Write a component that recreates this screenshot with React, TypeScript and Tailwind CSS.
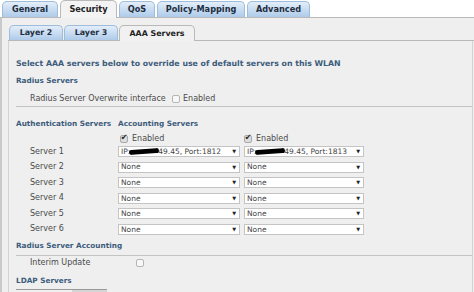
const outerTabs = [
  { label: "General", w: "w-[56px]" },
  { label: "Security", w: "w-[57px]", active: true },
  { label: "QoS", w: "w-[36px]" },
  { label: "Policy-Mapping", w: "w-[88px]" },
  { label: "Advanced", w: "w-[63px]" },
];

const innerTabs = [
  { label: "Layer 2", w: "w-[54px]" },
  { label: "Layer 3", w: "w-[54px]" },
  { label: "AAA Servers", w: "w-[76px]", active: true },
];

const servers = [
  { name: "Server 1", auth: "1812", acct: "1813" },
  { name: "Server 2" },
  { name: "Server 3" },
  { name: "Server 4" },
  { name: "Server 5" },
  { name: "Server 6" },
];

function Checkbox({ checked = false }: { checked?: boolean }) {
  return (
    <span
      className={`relative inline-flex h-[8px] w-[8px] items-center justify-center rounded-[2px] border ${
        checked ? "border-[#a9a9a9] bg-[#dcdcdc]" : "border-[#b5b5b5] bg-[#f7f7f7]"
      }`}
    >
      {checked && <span className="text-[8px] leading-none text-[#222] -mt-[1px]">✔</span>}
    </span>
  );
}

function Select({ port, wide = "w-[122px]" }: { port?: string; wide?: string }) {
  return (
    <div
      className={`flex h-[11px] ${wide} items-center justify-between border border-[#c4c4c4] bg-white pl-[2px] pr-[3px] text-[7.5px] leading-none text-[#444]`}
    >
      {port ? (
        <span className="flex items-center whitespace-nowrap">
          IP:
          <span className="mx-[-1px] inline-block h-[5px] w-[30px] -rotate-[4deg] rounded-full bg-black" />
          49.45, Port:{port}
        </span>
      ) : (
        <span>None</span>
      )}
      <span className="text-[5px] text-[#222]">▼</span>
    </div>
  );
}

export default function App() {
  return (
    <div className="h-[292px] w-[474px] overflow-hidden bg-white font-['DejaVu_Sans',sans-serif]">
      {/* top tabs */}
      <div className="flex h-[18px] items-end gap-[2px] border-b border-[#b9b9b9] pl-[2px]">
        {outerTabs.map((t) =>
          t.active ? (
            <div
              key={t.label}
              className={`${t.w} -mb-px flex h-[18px] items-center justify-center rounded-t-[5px] border border-b-0 border-[#b9b9b9] bg-[#f3f3f3] text-[8.2px] font-bold text-[#222]`}
            >
              {t.label}
            </div>
          ) : (
            <div
              key={t.label}
              className={`${t.w} flex h-[16px] items-center justify-center rounded-t-[5px] border border-b-0 border-[#9fbcd9] bg-gradient-to-b from-[#e3eef9] to-[#aecbea] text-[8.2px] font-bold text-[#1f2e3f]`}
            >
              {t.label}
            </div>
          )
        )}
      </div>

      {/* outer panel */}
      <div className="h-[274px] border-l-2 border-[#c9c9c9] bg-[#efefef] pl-[6px] pt-[7px]">
        <div className="flex h-[16px] items-end gap-[1px] border-b border-[#b9b9b9] pl-[1px]">
          {innerTabs.map((t) =>
            t.active ? (
              <div
                key={t.label}
                className={`${t.w} -mb-px flex h-[16px] items-center justify-center rounded-t-[5px] border border-b-0 border-[#b9b9b9] bg-[#f1f1f1] text-[7.9px] font-bold text-[#222]`}
              >
                {t.label}
              </div>
            ) : (
              <div
                key={t.label}
                className={`${t.w} flex h-[15px] items-center justify-center rounded-t-[5px] border border-b-0 border-[#9fbcd9] bg-gradient-to-b from-[#e3eef9] to-[#aecbea] text-[7.9px] font-bold text-[#1f2e3f]`}
              >
                {t.label}
              </div>
            )
          )}
        </div>

        {/* inner panel */}
        <div className="mr-[1px] h-[260px] border-l border-r border-[#d3d3d3] pl-[7px] pt-[17px] text-[8px] text-[#4a4a4a]">
          <div className="h-[11px] text-[7.8px] font-bold leading-[11px] text-[#3d5c7c]">
            Select AAA servers below to override use of default servers on this WLAN
          </div>

          <div className="mt-[6px] h-[11px] text-[7.3px] font-bold leading-[11px] text-[#3d5c7c]">Radius Servers</div>

          <div className="mt-[7px] flex h-[11px] items-center pl-[14px]">
            <span className="w-[142px] leading-[11px]">Radius Server Overwrite interface</span>
            <span className="flex items-center gap-[3px]">
              <Checkbox />
              <span>Enabled</span>
            </span>
          </div>
          <div className="mt-[2px] border-t border-[#c3c3c3]" />

          <div className="mt-[12px] flex h-[11px] items-center text-[7.3px] font-bold text-[#3d5c7c]">
            <span className="w-[102px]">Authentication Servers</span>
            <span>Accounting Servers</span>
          </div>

          <div className="mt-[3px] flex h-[11px] items-center">
            <span className="ml-[104px] flex w-[124px] items-center gap-[4px]">
              <Checkbox checked />
              <span>Enabled</span>
            </span>
            <span className="flex items-center gap-[4px]">
              <Checkbox checked />
              <span>Enabled</span>
            </span>
          </div>

          <div className="mt-[2px] flex flex-col gap-[4.6px]">
            {servers.map((s) => (
              <div key={s.name} className="flex h-[11px] items-center">
                <span className="w-[102px] pl-[14px]">{s.name}</span>
                <div className="flex gap-[4px]">
                  <Select port={s.auth} />
                  <Select port={s.acct} wide="w-[120px]" />
                </div>
              </div>
            ))}
          </div>

          <div className="mt-[5px] h-[11px] text-[7.3px] font-bold leading-[11px] text-[#3d5c7c]">
            Radius Server Accounting
          </div>
          <div className="mt-[4px] border-t border-[#c3c3c3]" />

          <div className="mt-[2px] flex h-[11px] items-center pl-[14px]">
            <span className="w-[106px]">Interim Update</span>
            <Checkbox />
          </div>

          <div className="mt-[6px] h-[11px] text-[7.3px] font-bold leading-[11px] text-[#3d5c7c]">LDAP Servers</div>
          <div className="mt-[3px] w-[91px] border-t border-[#9a9a9a]" />
          <div className="ml-[56px] h-[4px] w-[35px] bg-[#d4d4d4]" />
        </div>
      </div>
    </div>
  );
}
